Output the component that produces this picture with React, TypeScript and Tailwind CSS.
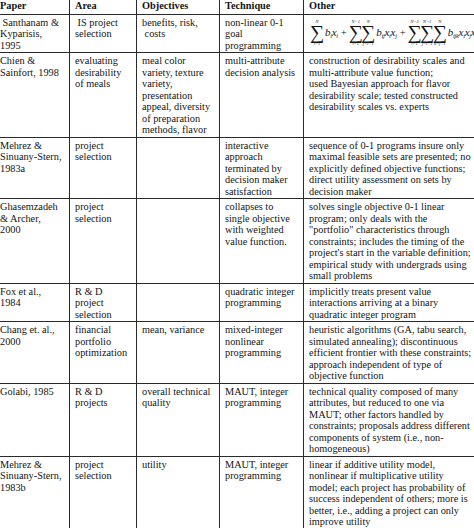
import React from "react";

type Row = {
  paper: string[];
  area: string[];
  obj: string[];
  tech: string[];
  other: string[] | "formula";
};

const rows: Row[] = [
  {
    paper: [" Santhanam &", "Kyparisis,", "1995"],
    area: [" IS project", "selection"],
    obj: ["benefits, risk,", " costs"],
    tech: ["non-linear 0-1", "goal", "programming"],
    other: "formula",
  },
  {
    paper: ["Chien &", "Sainfort, 1998"],
    area: ["evaluating", "desirability", "of meals"],
    obj: ["meal color", "variety, texture", "variety,", "presentation", "appeal, diversity", "of preparation", "methods, flavor"],
    tech: ["multi-attribute", "decision analysis"],
    other: [
      "construction of desirability scales and",
      "multi-attribute value function;",
      "used Bayesian approach for flavor",
      "desirability scale; tested constructed",
      "desirability scales vs. experts",
    ],
  },
  {
    paper: ["Mehrez &", "Sinuany-Stern,", "1983a"],
    area: ["project", "selection"],
    obj: [],
    tech: ["interactive", "approach", "terminated by", "decision maker", "satisfaction"],
    other: [
      "sequence of 0-1 programs insure only",
      "maximal feasible sets are presented; no",
      "explicitly defined objective functions;",
      "direct utility assessment on sets by",
      "decision maker",
    ],
  },
  {
    paper: ["Ghasemzadeh", "& Archer,", "2000"],
    area: ["project", "selection"],
    obj: [],
    tech: ["collapses to", "single objective", "with weighted", "value function."],
    other: [
      "solves single objective 0-1 linear",
      "program; only deals with the",
      "\"portfolio\" characteristics through",
      "constraints; includes the timing of the",
      "project's start in the variable definition;",
      "empirical study with undergrads using",
      "small problems",
    ],
  },
  {
    paper: ["Fox et al.,", "1984"],
    area: ["R & D", "project", "selection"],
    obj: [],
    tech: ["quadratic integer", "programming"],
    other: [
      "implicitly treats present value",
      "interactions arriving at a binary",
      "quadratic integer program",
    ],
  },
  {
    paper: ["Chang et. al.,", "2000"],
    area: ["financial", "portfolio", "optimization"],
    obj: ["mean, variance"],
    tech: ["mixed-integer", "nonlinear", "programming"],
    other: [
      "heuristic algorithms (GA, tabu search,",
      "simulated annealing); discontinuous",
      "efficient frontier with these constraints;",
      "approach independent of type of",
      "objective function",
    ],
  },
  {
    paper: ["Golabi, 1985"],
    area: ["R & D", "projects"],
    obj: ["overall technical", "quality"],
    tech: ["MAUT, integer", "programming"],
    other: [
      "technical quality composed of many",
      "attributes, but reduced to one via",
      "MAUT; other factors handled by",
      "constraints; proposals address different",
      "components of system (i.e., non-",
      "homogeneous)",
    ],
  },
  {
    paper: ["Mehrez &", "Sinuany-Stern,", "1983b"],
    area: ["project", "selection"],
    obj: ["utility"],
    tech: ["MAUT, integer", "programming"],
    other: [
      "linear if additive utility model,",
      "nonlinear if multiplicative utility",
      "model; each project has probability of",
      "success independent of others; more is",
      "better, i.e., adding a project can only",
      "improve utility",
    ],
  },
];

function Lines({ lines }: { lines: string[] }) {
  return (
    <>
      {lines.map((l, i) => (
        <div key={i} className="whitespace-pre">
          {l}
        </div>
      ))}
    </>
  );
}

function Sum({ top, bot }: { top: string; bot: string }) {
  return (
    <span className="inline-flex flex-col items-center w-[12px] shrink-0">
      <span className="text-[4.5px] leading-[6px] italic">{top}</span>
      <span className="text-[20px] leading-[15px]">∑</span>
      <span className="text-[4.5px] leading-[7px] italic">{bot}</span>
    </span>
  );
}

function Term({ children }: { children: React.ReactNode }) {
  return <span className="text-[11px] leading-[12px] italic ml-[2px] tracking-[-0.3px]">{children}</span>;
}

function Sub({ children }: { children: React.ReactNode }) {
  return <span className="text-[6.5px] relative top-[2px]">{children}</span>;
}

function Plus() {
  return <span className="text-[10.5px] mx-[3px]">+</span>;
}

function Formula() {
  return (
    <div className="flex items-center whitespace-nowrap pl-[2px] pt-[2px]">
      <Sum top="N" bot="i=1" />
      <Term>
        b<Sub>i</Sub>x<Sub>i</Sub>
      </Term>
      <Plus />
      <Sum top="N−1" bot="i=1" />
      <span className="w-[2px]" />
      <Sum top="N" bot="j=i+1" />
      <Term>
        b<Sub>ij</Sub>x<Sub>i</Sub>x<Sub>j</Sub>
      </Term>
      <Plus />
      <Sum top="N−2" bot="i=1" />
      <span className="w-[2px]" />
      <Sum top="N−1" bot="j=i+1" />
      <span className="w-[3px]" />
      <Sum top="N" bot="k=j+1" />
      <Term>
        b<Sub>ijk</Sub>x<Sub>i</Sub>x<Sub>j</Sub>x<Sub>k</Sub>
      </Term>
    </div>
  );
}

const td = "border border-[#2a2a2a] align-top px-[5px] pt-[2px] pb-[1px]";
const th = "border border-t-0 border-[#2a2a2a] text-left font-bold align-top px-[5px] pt-0 pb-[2px]";

export default function App() {
  return (
    <div className="w-[474px] h-[528px] overflow-hidden bg-white font-[family-name:'Liberation_Serif','Times_New_Roman',serif]">
      <table className="table-fixed border-collapse ml-[-6px] w-[489px] text-[10.3px] leading-[11.5px] text-[#141414]">
        <colgroup>
          <col className="w-[75px]" />
          <col className="w-[67px]" />
          <col className="w-[83px]" />
          <col className="w-[84px]" />
          <col className="w-[180px]" />
        </colgroup>
        <thead>
          <tr>
            <th className={th}>Paper</th>
            <th className={th}>Area</th>
            <th className={th}>Objectives</th>
            <th className={th}>Technique</th>
            <th className={th}>Other</th>
          </tr>
        </thead>
        <tbody>
          {rows.map((r, i) => (
            <tr key={i}>
              <td className={td}>
                <Lines lines={r.paper} />
              </td>
              <td className={td}>
                <Lines lines={r.area} />
              </td>
              <td className={td}>
                <Lines lines={r.obj} />
              </td>
              <td className={td}>
                <Lines lines={r.tech} />
              </td>
              <td className={td}>
                {r.other === "formula" ? <Formula /> : <Lines lines={r.other} />}
              </td>
            </tr>
          ))}
        </tbody>
      </table>
    </div>
  );
}
